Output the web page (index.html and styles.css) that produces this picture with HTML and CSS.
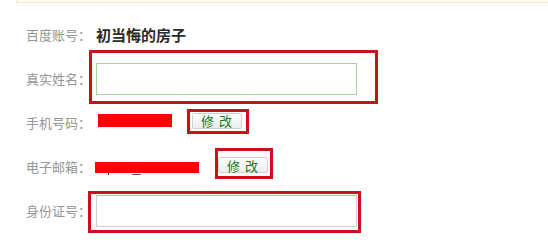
FILE: index.html
```html
<!DOCTYPE html>
<html lang="zh-CN">
<head>
<meta charset="utf-8">
<link rel="stylesheet" href="styles.css">
</head>
<body>
<div class="notice"></div>
<div class="form">
  <div class="row">
    <span class="label">百度账号：</span>
    <span class="account">初当悔的房子</span>
  </div>
  <div class="row">
    <span class="label">真实姓名：</span>
    <span class="mark mark-name"><span class="field field-green"></span></span>
  </div>
  <div class="row">
    <span class="label">手机号码：</span>
    <span class="redact redact-phone"></span>
    <span class="mark mark-btn1"><span class="btn">修 改</span></span>
  </div>
  <div class="row">
    <span class="label">电子邮箱：</span>
    <span class="redact redact-mail"><span class="peek peek-one"></span><span class="peek peek-at"></span></span>
    <span class="mark mark-btn2"><span class="btn">修 改</span></span>
  </div>
  <div class="row">
    <span class="label">身份证号：</span>
    <span class="mark mark-id"><span class="field field-gray"></span></span>
  </div>
</div>
</body>
</html>
```
FILE: styles.css
```css
html, body {
  margin: 0;
  padding: 0;
  background: #fff;
}
body {
  font-family: "Noto Sans CJK SC", "Noto Sans", sans-serif;
  width: 548px;
  height: 238px;
  overflow: hidden;
}
.notice {
  margin-left: 16px;
  height: 2px;
  background: #fffdf0;
  border-left: 1px solid #f2e9c6;
  border-bottom: 1px solid #f2e9c6;
}
.form {
  padding-left: 26px;
  margin-top: 10px;
}
.row {
  display: flex;
  align-items: center;
  height: 44px;
}
.label {
  width: 70px;
  flex: none;
  font-size: 13px;
  line-height: 16px;
  color: #959595;
  white-space: nowrap;
}
.account {
  font-size: 15px;
  font-weight: bold;
  color: #2b2b2b;
  line-height: 18px;
}
.mark {
  display: flex;
  flex: none;
  border: 3px solid #c8111a;
}
.mark-name {
  margin: -4px 0 0 -7px;
  padding: 10px 18px 6px 4px;
}
.mark-id {
  margin: 2px 0 0 -8px;
  padding: 1px 1px 3px 5px;
}
.field {
  display: block;
  width: 259px;
  height: 30px;
  background: #fff;
}
.field-green {
  border: 1px solid #a6d3a0;
}
.field-gray {
  border: 1px solid #cfcfcf;
  border-top-color: #b8b8b8;
}
.redact {
  display: block;
  flex: none;
  background: #ff0000;
}
.redact-phone {
  width: 74px;
  height: 13px;
  margin: 0 0 5px 2px;
}
.redact-mail {
  position: relative;
  width: 104px;
  height: 11px;
  margin: 0 0 0 -1px;
}
.peek {
  position: absolute;
  top: 11px;
  height: 2px;
  background: #333;
}
.peek-one {
  left: 13px;
  width: 1px;
}
.peek-at {
  left: 37px;
  width: 9px;
  height: 1px;
  top: 12px;
  border-radius: 0 0 4px 4px;
  background: #555;
}
.mark-btn1 {
  margin: 0 0 4px 15px;
  padding: 1px 4px 2px 2px;
}
.mark-btn2 {
  margin: 0 0 7px 16px;
  padding: 6px 2px 3px 0;
}
.btn {
  display: flex;
  align-items: center;
  justify-content: center;
  box-sizing: border-box;
  width: 50px;
  height: 16px;
  border: 1px solid #d0d0d0;
  border-radius: 2px;
  background: linear-gradient(#ffffff, #ececec);
  color: #127a12;
  font-size: 13px;
  letter-spacing: 1px;
  white-space: pre;
}
```
